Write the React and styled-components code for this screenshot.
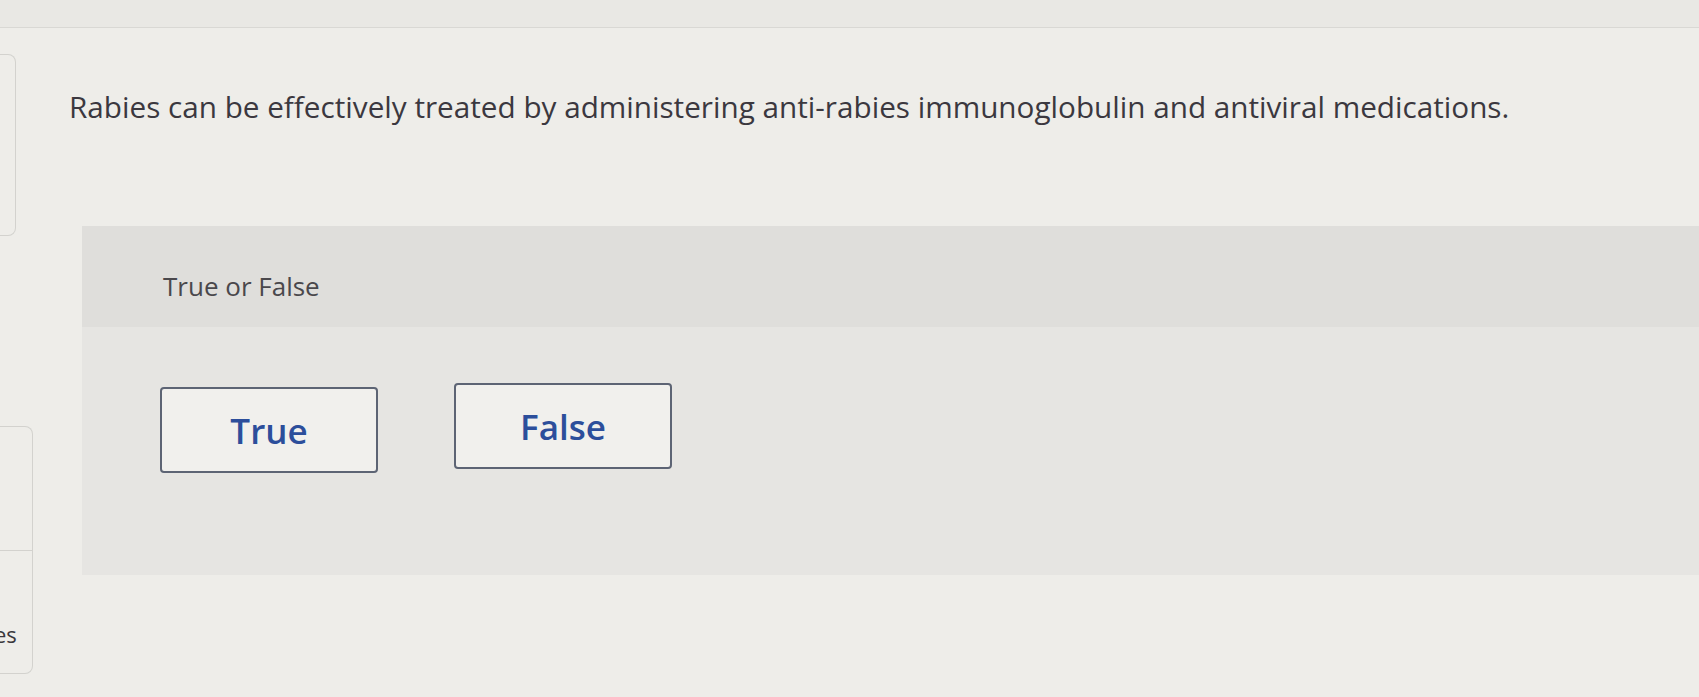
import React from "react";
import styled, { createGlobalStyle } from "styled-components";

const GlobalStyle = createGlobalStyle`
  html, body {
    margin: 0;
    padding: 0;
    background: #eeede9;
  }
  body {
    font-family: "Open Sans", "Lato", sans-serif;
    overflow: hidden;
  }
`;

const Page = styled.div`
  width: 1699px;
  height: 697px;
  background: #eeede9;
  overflow: hidden;
`;

const TopStrip = styled.div`
  height: 27px;
  background: #e9e8e4;
  border-bottom: 1px solid #d9d8d4;
`;

const Layout = styled.div`
  display: flex;
  align-items: flex-start;
`;

const Sidebar = styled.aside`
  width: 40px;
  flex-shrink: 0;
  display: flex;
  flex-direction: column;
`;

const SideCard = styled.div`
  box-sizing: border-box;
  width: ${(p) => p.$width}px;
  height: ${(p) => p.$height}px;
  margin-top: ${(p) => p.$top}px;
  border: 1px solid #d3d2ce;
  border-left: none;
  border-radius: 0 8px 8px 0;
  display: flex;
  flex-direction: column;
`;

const SideSlot = styled.div`
  flex: 1;
  display: flex;
  align-items: flex-end;
  padding-bottom: 24px;
  font-size: 22px;
  color: #3a383c;
  margin-left: -6px;
  & + & {
    border-top: 1px solid #d3d2ce;
  }
`;

const Main = styled.main`
  flex: 1;
  min-width: 0;
`;

const Question = styled.p`
  margin: 59px 0 0 29px;
  font-size: 29.7px;
  line-height: 40px;
  color: #3b383f;
  white-space: nowrap;
`;

const Panel = styled.section`
  margin: 99px 0 0 42px;
  background: #e6e5e2;
  height: 349px;
  display: flex;
  flex-direction: column;
`;

const PanelHead = styled.div`
  height: 101px;
  background: #dfdedb;
  box-sizing: border-box;
  padding: 44px 0 0 81px;
  font-size: 26px;
  line-height: 32px;
  color: #4a484c;
`;

const Choices = styled.div`
  display: flex;
  gap: 76px;
  padding: 60px 0 0 78px;
`;

const Choice = styled.button`
  width: 218px;
  height: 86px;
  box-sizing: border-box;
  border: 2px solid #5d6474;
  border-radius: 4px;
  background: #f1f0ed;
  color: #2c4e9b;
  font-family: "Open Sans", "Lato", sans-serif;
  font-weight: 600;
  font-size: 35px;
  cursor: pointer;
  margin-top: ${(p) => p.$shift || 0}px;
`;

export default function App() {
  return (
    <Page>
      <GlobalStyle />
      <TopStrip />
      <Layout>
        <Sidebar>
          <SideCard $width={16} $height={182} $top={26} />
          <SideCard $width={33} $height={248} $top={190}>
            <SideSlot />
            <SideSlot>es</SideSlot>
          </SideCard>
        </Sidebar>
        <Main>
          <Question>
            Rabies can be effectively treated by administering anti-rabies
            immunoglobulin and antiviral medications.
          </Question>
          <Panel>
            <PanelHead>True or False</PanelHead>
            <Choices>
              <Choice>True</Choice>
              <Choice $shift={-4}>False</Choice>
            </Choices>
          </Panel>
        </Main>
      </Layout>
    </Page>
  );
}
